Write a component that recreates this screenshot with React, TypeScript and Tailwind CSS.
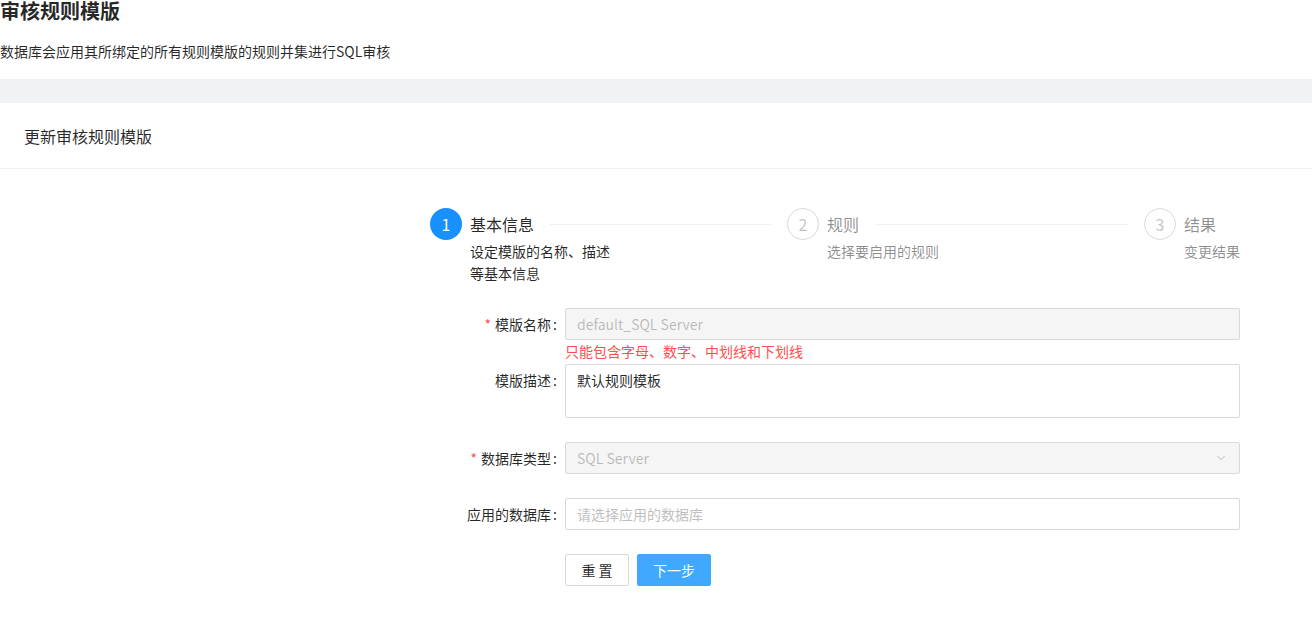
import { ChevronDown } from "lucide-react";

const FONT = "font-['Noto_Sans_CJK_SC','Liberation_Sans',sans-serif]";

type Step = { no: number; title: string; desc: string; state: "process" | "wait" };

const STEPS: Step[] = [
  { no: 1, title: "基本信息", desc: "设定模版的名称、描述等基本信息", state: "process" },
  { no: 2, title: "规则", desc: "选择要启用的规则", state: "wait" },
  { no: 3, title: "结果", desc: "变更结果", state: "wait" },
];

const StepItem = ({ step, last, className }: { step: Step; last: boolean; className: string }) => {
  const active = step.state === "process";
  return (
    <div className={`flex overflow-hidden ${className}`}>
      <div
        className={`flex h-8 w-8 shrink-0 items-center justify-center rounded-full text-[16px] leading-none ${
          active ? "bg-[#1890ff] text-white" : "border border-[#d9d9d9] text-[rgba(0,0,0,0.25)]"
        }`}
      >
        {step.no}
      </div>
      <div className="ml-2 min-w-0">
        <div
          className={`relative inline-block pr-4 text-[16px] leading-8 whitespace-nowrap ${
            active ? "text-[rgba(0,0,0,0.85)]" : "text-[rgba(0,0,0,0.45)]"
          }`}
        >
          {step.title}
          {!last && <span className="absolute left-full top-4 block h-px w-[9999px] bg-[#f0f0f0]" />}
        </div>
        <div
          className={`max-w-[140px] text-[14px] leading-[22px] ${
            active ? "text-[rgba(0,0,0,0.85)]" : "text-[rgba(0,0,0,0.45)]"
          }`}
        >
          {step.desc}
        </div>
      </div>
    </div>
  );
};

const Label = ({ text, required }: { text: string; required?: boolean }) => (
  <div className="flex h-8 w-[135px] shrink-0 items-center justify-end pr-2 text-[14px] text-[rgba(0,0,0,0.85)]">
    {required && <span className="mr-1 text-[14px] text-[#ff4d4f]">*</span>}
    <span>{text}</span>
    <span className="ml-[2px]">:</span>
  </div>
);

export default function App() {
  return (
    <div className={`min-h-screen w-full overflow-hidden bg-white ${FONT}`}>
      <div className="-mt-[3px] pb-[17px]">
        <h1 className="text-[20px] font-bold leading-[28px] text-[rgba(0,0,0,0.85)]">审核规则模版</h1>
        <p className="mt-[15px] text-[14px] leading-[22px] text-[rgba(0,0,0,0.85)]">
          数据库会应用其所绑定的所有规则模版的规则并集进行SQL审核
        </p>
      </div>
      <div className="h-6 bg-[#f0f2f5]" />
      <div className="bg-white">
        <div className="flex h-[66px] items-center border-b border-[#f0f0f0] px-6 text-[16px] text-[rgba(0,0,0,0.85)]">
          更新审核规则模版
        </div>
        <div className="pl-[430px] pr-[72px] pt-[39px]">
          <div className="flex w-[810px]">
            <StepItem step={STEPS[0]} last={false} className="w-[341px] shrink-0" />
            <StepItem step={STEPS[1]} last={false} className="flex-1 pl-4" />
            <StepItem step={STEPS[2]} last className="flex-none pl-4" />
          </div>

          <div className="mt-6 flex flex-col">
            <div className="flex">
              <Label text="模版名称" required />
              <div className="w-[675px]">
                <div className="flex h-8 items-center rounded-[2px] border border-[#d9d9d9] bg-[#f5f5f5] px-[11px] text-[14px] text-[rgba(0,0,0,0.25)]">
                  default_SQL Server
                </div>
                <div className="h-6 text-[14px] leading-[22px] text-[#ff4d4f]">只能包含字母、数字、中划线和下划线</div>
              </div>
            </div>

            <div className="flex">
              <Label text="模版描述" />
              <div className="h-[54px] w-[675px] rounded-[2px] border border-[#d9d9d9] px-[11px] py-1 text-[14px] leading-[22px] text-[rgba(0,0,0,0.85)]">
                默认规则模板
              </div>
            </div>

            <div className="mt-6 flex">
              <Label text="数据库类型" required />
              <div className="flex h-8 w-[675px] items-center justify-between rounded-[2px] border border-[#d9d9d9] bg-[#f5f5f5] pl-[11px] pr-[11px] text-[14px] text-[rgba(0,0,0,0.25)]">
                <span>SQL Server</span>
                <ChevronDown size={14} strokeWidth={1.5} className="text-[rgba(0,0,0,0.25)]" />
              </div>
            </div>

            <div className="mt-6 flex">
              <Label text="应用的数据库" />
              <div className="flex h-8 w-[675px] items-center rounded-[2px] border border-[#d9d9d9] px-[11px] text-[14px] text-[#bfbfbf]">
                请选择应用的数据库
              </div>
            </div>

            <div className="mt-6 flex pl-[135px]">
              <button className="h-8 w-16 rounded-[2px] border border-[#d9d9d9] bg-white text-[14px] text-[rgba(0,0,0,0.85)]">
                重 置
              </button>
              <button className="ml-2 h-8 w-[74px] rounded-[2px] border border-[#40a9ff] bg-[#40a9ff] text-[14px] text-white">
                下一步
              </button>
            </div>
          </div>
        </div>
      </div>
    </div>
  );
}
